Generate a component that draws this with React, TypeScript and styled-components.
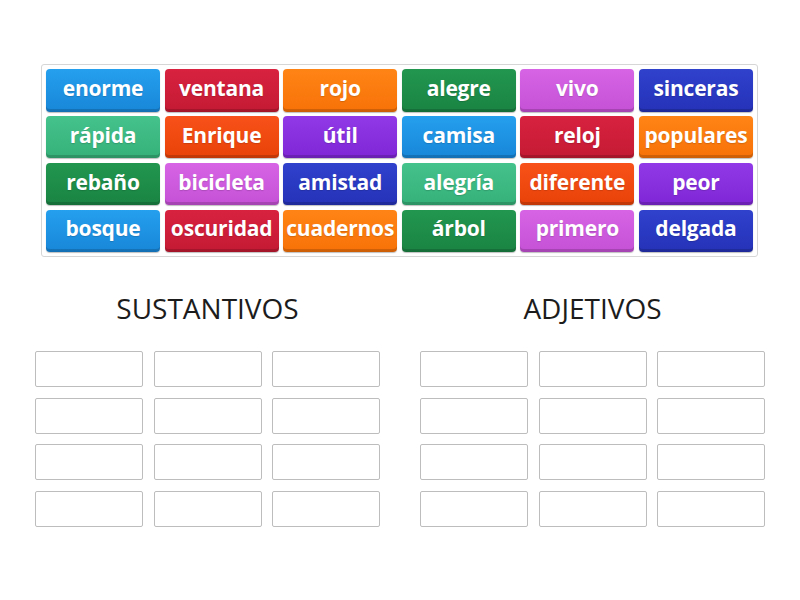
import React from "react";
import styled, { createGlobalStyle } from "styled-components";

const GlobalStyle = createGlobalStyle`
  html, body { margin: 0; padding: 0; background: #ffffff; }
  body { font-family: "Open Sans", "Liberation Sans", sans-serif; }
`;

type Tone = "blue" | "red" | "orange" | "green" | "violet" | "navy" | "mint" | "flame" | "purple";

const palette: Record<Tone, [string, string]> = {
  blue: ["#25a0ee", "#1886d8"],
  red: ["#d8223f", "#c41a33"],
  orange: ["#ff8416", "#f77208"],
  green: ["#22964f", "#1a8443"],
  violet: ["#d664e4", "#c551d6"],
  navy: ["#3041cc", "#2532b8"],
  mint: ["#45c38c", "#35b079"],
  flame: ["#f8521a", "#e84208"],
  purple: ["#9139e6", "#7f27d6"],
};

const words: [string, Tone][] = [
  ["enorme", "blue"], ["ventana", "red"], ["rojo", "orange"], ["alegre", "green"], ["vivo", "violet"], ["sinceras", "navy"],
  ["rápida", "mint"], ["Enrique", "flame"], ["útil", "purple"], ["camisa", "blue"], ["reloj", "red"], ["populares", "orange"],
  ["rebaño", "green"], ["bicicleta", "violet"], ["amistad", "navy"], ["alegría", "mint"], ["diferente", "flame"], ["peor", "purple"],
  ["bosque", "blue"], ["oscuridad", "red"], ["cuadernos", "orange"], ["árbol", "green"], ["primero", "violet"], ["delgada", "navy"],
];

const Page = styled.div`
  width: 800px;
  height: 600px;
  padding-top: 64px;
  box-sizing: border-box;
`;

const WordBank = styled.div`
  margin-left: 41px;
  width: 717px;
  height: 193px;
  box-sizing: border-box;
  border: 1px solid #d6d6d6;
  border-radius: 3px;
  padding: 4px 4px 0 4px;
  display: grid;
  grid-template-columns: repeat(6, 114px);
  grid-auto-rows: 42.5px;
  column-gap: 4.6px;
  row-gap: 4.4px;
`;

const Tile = styled.div<{ $tone: Tone }>`
  border-radius: 4px;
  background: linear-gradient(
    to bottom,
    ${(p) => palette[p.$tone][0]} 0%,
    ${(p) => palette[p.$tone][1]} 100%
  );
  box-shadow: inset 0 -3px 0 rgba(0, 0, 0, 0.16), 0 1px 1px rgba(0, 0, 0, 0.25);
  color: #ffffff;
  font-family: "Open Sans", "Liberation Sans", sans-serif;
  font-weight: 700;
  font-size: 21px;
  letter-spacing: -0.2px;
  display: flex;
  align-items: center;
  justify-content: center;
  padding-bottom: 5px;
  box-sizing: border-box;
  white-space: nowrap;
  text-shadow: 0 1px 1px rgba(0, 0, 0, 0.15);
`;

const Groups = styled.div`
  display: flex;
  margin-top: 33px;
  padding-left: 35px;
  gap: 40px;
`;

const Group = styled.div`
  width: 345px;
  display: flex;
  flex-direction: column;
  align-items: center;
`;

const Heading = styled.div`
  font-size: 28px;
  font-weight: 400;
  color: #1c1c1c;
  line-height: 36px;
  height: 36px;
  margin-bottom: 25px;
`;

const Slots = styled.div`
  display: grid;
  grid-template-columns: repeat(3, 108px);
  grid-auto-rows: 36px;
  column-gap: 10.5px;
  row-gap: 10.7px;
`;

const Slot = styled.div`
  border: 1px solid #bdbdbd;
  border-radius: 2px;
  box-sizing: border-box;
  background: #ffffff;
`;

function DropGroup({ title }: { title: string }) {
  return (
    <Group>
      <Heading>{title}</Heading>
      <Slots>
        {Array.from({ length: 12 }).map((_, i) => (
          <Slot key={i} />
        ))}
      </Slots>
    </Group>
  );
}

export default function App() {
  return (
    <Page>
      <GlobalStyle />
      <WordBank>
        {words.map(([w, t]) => (
          <Tile key={w} $tone={t}>
            {w}
          </Tile>
        ))}
      </WordBank>
      <Groups>
        <DropGroup title="SUSTANTIVOS" />
        <DropGroup title="ADJETIVOS" />
      </Groups>
    </Page>
  );
}
